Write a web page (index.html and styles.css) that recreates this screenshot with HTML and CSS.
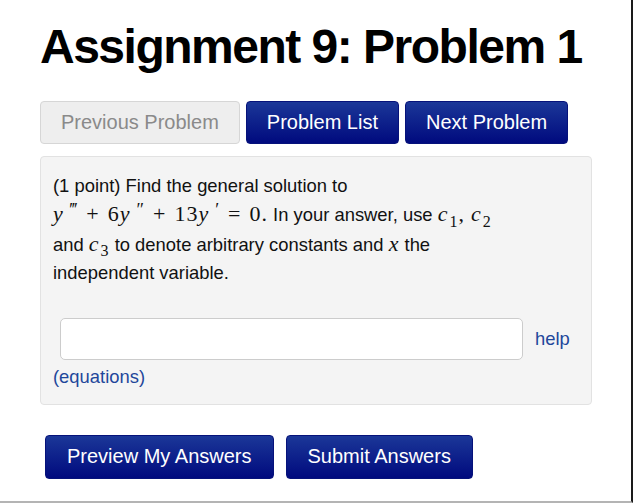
FILE: index.html
```html
<!DOCTYPE html>
<html>
<head>
    <meta charset="UTF-8">
    <title>Assignment 9: Problem 1</title>
    <link rel="stylesheet" href="styles.css">
</head>
<body>
    <div class="page">
        <h1 class="title">Assignment 9: Problem 1</h1>

        <div class="nav">
            <button class="btn btn-disabled" disabled>Previous Problem</button>
            <button class="btn">Problem List</button>
            <button class="btn">Next Problem</button>
        </div>

        <div class="problem">
            <div class="problem-text">
                (1 point) Find the general solution to<br>
                <span class="math"><i>y</i><span class="prime">&#8244;</span><span class="op">+</span>6<i>y</i><span class="prime">&#8243;</span><span class="op">+</span>13<i>y</i><span class="prime">&#8242;</span><span class="rel">=</span>0.</span> In your answer, use <span class="math"><i>c</i><sub>1</sub><span class="comma">,</span><i>c</i><sub>2</sub></span><br>
                and <span class="math"><i>c</i><sub>3</sub></span> to denote arbitrary constants and <span class="math"><i>x</i></span> the<br>
                independent variable.
            </div>

            <div class="answer">
                <input type="text" class="answer-input">
                <a href="#" class="link">help</a>
            </div>
            <a href="#" class="link">(equations)</a>
        </div>

        <div class="submit-row">
            <button class="btn btn-big">Preview My Answers</button>
            <button class="btn btn-big">Submit Answers</button>
        </div>
    </div>
</body>
</html>
```

FILE: styles.css
```css
* {
    box-sizing: border-box;
}

body {
    margin: 0;
    font-family: "Liberation Sans", Arial, sans-serif;
    background: white;
}

.page {
    width: 633px;
    height: 503px;
    padding: 19px 0 0 40px;
    border-right: 2px solid #1a1a1a;
    border-bottom: 2px solid #b4b4b4;
    overflow: hidden;
}

.title {
    margin: 0;
    font-size: 48px;
    line-height: 56px;
    font-weight: bold;
    letter-spacing: -1.5px;
    color: black;
}

.nav {
    display: flex;
    gap: 6px;
    margin-top: 26px;
}

.btn {
    height: 43px;
    padding: 0 20px;
    font-family: "Liberation Sans", Arial, sans-serif;
    font-size: 20px;
    color: white;
    background: linear-gradient(#1b3798, #000a7e);
    border: 1px solid #06127a;
    border-radius: 4px;
    cursor: pointer;
}

.btn-disabled {
    color: #8a8a8a;
    background: #eeeeee;
    border-color: #d6d6d6;
    cursor: default;
}

.btn-big {
    height: 44px;
    padding: 0 21px;
}

.problem {
    width: 552px;
    margin-top: 12px;
    padding: 15px 12px 14px 12px;
    background: #f4f4f4;
    border: 1px solid #e2e2e2;
    border-radius: 4px;
}

.problem-text {
    font-size: 18.4px;
    line-height: 28.4px;
    color: #111;
}

.math {
    font-family: "Liberation Serif", "DejaVu Serif", serif;
    font-size: 22px;
    letter-spacing: 1px;
}

.math i {
    font-style: italic;
}

.math sub {
    margin-left: 1px;
    font-size: 16px;
    line-height: 0;
}

.comma {
    margin-right: 6px;
}

.prime {
    display: inline-block;
    margin-left: 6px;
    font-size: 18px;
    vertical-align: 5px;
    line-height: 0;
}

.op {
    margin: 0 8px;
}

.rel {
    margin: 0 8px;
}

.answer {
    display: flex;
    align-items: center;
    gap: 12px;
    margin-top: 30px;
    padding-left: 7px;
}

.answer-input {
    width: 463px;
    height: 42px;
    background: white;
    border: 1px solid #cccccc;
    border-radius: 5px;
    font-size: 18px;
}

.link {
    font-size: 18.4px;
    line-height: 26px;
    color: #1f479b;
    text-decoration: none;
}

.answer + .link {
    display: block;
    margin-top: 4px;
}

.submit-row {
    display: flex;
    gap: 12px;
    margin-top: 30px;
    padding-left: 5px;
}
```
